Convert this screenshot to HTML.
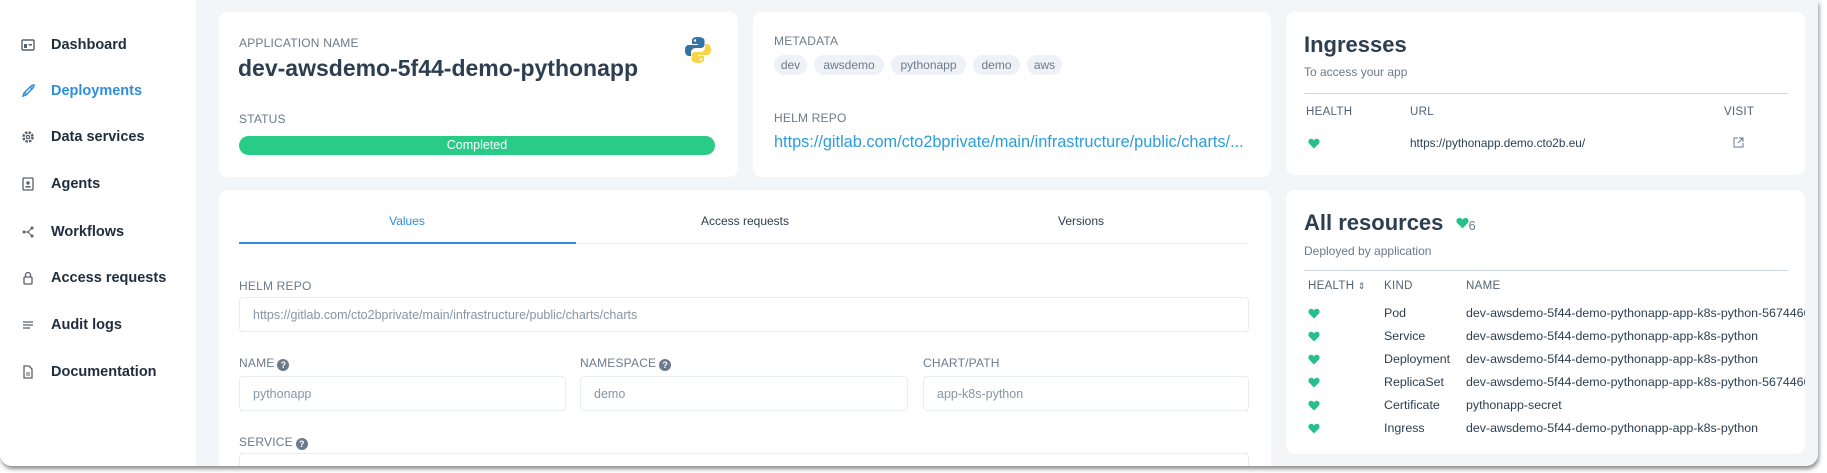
<!DOCTYPE html>
<html><head><meta charset="utf-8"><style>
*{box-sizing:border-box;margin:0;padding:0}
body{width:1827px;height:473px;background:#fff;font-family:"Liberation Sans",sans-serif;color:#2c3e50;overflow:hidden;position:relative}
#app{position:absolute;left:0;top:0;width:1818px;height:466px;background:#f3f6f9;border-radius:0 0 12px 12px;box-shadow:1px 3px 4px rgba(0,0,0,.45);overflow:hidden}
#side{position:absolute;left:0;top:0;width:196px;height:466px;background:#fff}
.nav{position:absolute;left:21px;font-size:14.5px;font-weight:bold;color:#1f2d3d;display:flex;align-items:center}
.nav svg{width:14px;height:14px;margin-right:16px}
.nav.act{color:#2d8fdf}
.card{position:absolute;background:#fff;border-radius:9px;overflow:hidden}
.lbl{position:absolute;font-size:12px;color:#6b7a8c;letter-spacing:.2px}
.chip{position:absolute;top:55px;height:20px;border-radius:10px;background:#eef2f6;color:#6b7a8c;font-size:12px;line-height:20px;text-align:center}
.inp{position:absolute;border:1px solid #e8edf2;border-radius:4px;font-size:12.5px;color:#8795a5;padding-left:13px;display:flex;align-items:center}
.q{display:inline-block;width:12px;height:12px;border-radius:50%;background:#6b7a8c;color:#fff;font-size:9px;line-height:12px;text-align:center;font-weight:bold;vertical-align:-1px;margin-left:3px}
.th{position:absolute;font-size:11.5px;color:#556272;letter-spacing:.3px}
.row{position:absolute;font-size:12.4px;color:#2c3e50;white-space:nowrap}
.heart{position:absolute;width:12px;height:11px}
.h2{position:absolute;font-size:22px;font-weight:bold;color:#2c3e50}
</style></head><body>
<svg width="0" height="0" style="position:absolute"><defs><symbol id="h" viewBox="0 0 24 22"><path d="M12 21L2.5 11.5C-0.5 8.5 0.5 2 6 1.5c3-.2 5 1.8 6 3.5 1-1.7 3-3.7 6-3.5 5.5.5 6.5 7 3.5 10z" fill="#27c08a"/></symbol></defs></svg>
<div id="app">
<div id="side">
<div class="nav" style="top:37px"><svg viewBox="0 0 14 14"><rect x="1" y="2" width="12" height="10" rx="1" fill="none" stroke="#56606b" stroke-width="1.4"/><rect x="3" y="6" width="3" height="4" fill="#56606b"/><rect x="7.5" y="6" width="3.5" height="1.5" fill="#56606b"/></svg>Dashboard</div>
<div class="nav act" style="top:83px"><svg viewBox="0 0 14 14"><path d="M2 12l3-1 6-6c1.5-1.5 2-3 2-4-1 0-2.5.5-4 2L3 9zM4 9l1 1M9 3l2 2" fill="none" stroke="#2d8fdf" stroke-width="1.5"/></svg>Deployments</div>
<div class="nav" style="top:129px"><svg viewBox="0 0 14 14"><circle cx="7" cy="7" r="4.5" fill="none" stroke="#56606b" stroke-width="2.5" stroke-dasharray="2.4 1.2"/><circle cx="7" cy="7" r="1.6" fill="none" stroke="#56606b" stroke-width="1.3"/></svg>Data services</div>
<div class="nav" style="top:176px"><svg viewBox="0 0 14 14"><rect x="2" y="1" width="10" height="12" rx="1" fill="none" stroke="#56606b" stroke-width="1.3"/><circle cx="7" cy="6" r="1.7" fill="#56606b"/><rect x="4.5" y="9" width="5" height="1.5" fill="#56606b"/></svg>Agents</div>
<div class="nav" style="top:224px"><svg viewBox="0 0 14 14"><circle cx="3" cy="7" r="1.5" fill="#56606b"/><circle cx="11" cy="3" r="1.5" fill="#56606b"/><circle cx="11" cy="11" r="1.5" fill="#56606b"/><circle cx="7" cy="7" r="1" fill="#56606b"/><path d="M3 7h4l4-4M7 7l4 4" stroke="#56606b" fill="none"/></svg>Workflows</div>
<div class="nav" style="top:270px"><svg viewBox="0 0 14 14"><rect x="3" y="6" width="8" height="7" rx="1" fill="none" stroke="#56606b" stroke-width="1.3"/><path d="M4.5 6V4a2.5 2.5 0 015 0v2" fill="none" stroke="#56606b" stroke-width="1.3"/></svg>Access requests</div>
<div class="nav" style="top:317px"><svg viewBox="0 0 14 14"><path d="M2 4h10M2 7h10M2 10h7" stroke="#56606b" stroke-width="1.3"/></svg>Audit logs</div>
<div class="nav" style="top:364px"><svg viewBox="0 0 14 14"><path d="M3 1h5l3 3v9H3z" fill="none" stroke="#56606b" stroke-width="1.3"/><path d="M5 8h4M5 10h4" stroke="#56606b"/></svg>Documentation</div>
</div>

<div class="card" style="left:219px;top:12px;width:519px;height:165px">
<div class="lbl" style="left:20px;top:24px">APPLICATION NAME</div>
<div style="position:absolute;left:19px;top:43px;font-size:23px;font-weight:bold;color:#2c3e50">dev-awsdemo-5f44-demo-pythonapp</div>
<svg style="position:absolute;left:466px;top:24px" width="26" height="28" viewBox="0 0 26 28"><path d="M13 1c-6 0-6 2.5-6 4v3h6v1H4C1 9 0 11 0 14.5S1.5 20 4 20h2v-3.5c0-2.5 2-4.5 4.5-4.5h5.5c2 0 3.5-1.5 3.5-3.5V4.5C19.5 2.5 17 1 13 1z" fill="#3572a5"/><circle cx="10" cy="4.5" r="1.2" fill="#fff"/><path d="M13 27c6 0 6-2.5 6-4v-3h-6v-1h9c3 0 4-2 4-5.5S24.5 8 22 8h-2v3.5c0 2.5-2 4.5-4.5 4.5H10c-2 0-3.5 1.5-3.5 3.5v4c0 2 2.5 3.5 6.5 3.5z" fill="#f7d44a"/><circle cx="16" cy="23.5" r="1.2" fill="#fff"/></svg>
<div class="lbl" style="left:20px;top:100px">STATUS</div>
<div style="position:absolute;left:20px;top:124px;width:476px;height:19px;border-radius:10px;background:#29cc87;color:#fff;font-size:12.5px;line-height:19px;text-align:center">Completed</div>
</div>

<div class="card" style="left:753px;top:12px;width:518px;height:165px">
<div class="lbl" style="left:21px;top:22px">METADATA</div>
<div class="chip" style="left:21px;width:33px;top:43px">dev</div>
<div class="chip" style="left:61px;width:70px;top:43px">awsdemo</div>
<div class="chip" style="left:138px;width:75px;top:43px">pythonapp</div>
<div class="chip" style="left:220px;width:47px;top:43px">demo</div>
<div class="chip" style="left:274px;width:35px;top:43px">aws</div>
<div class="lbl" style="left:21px;top:99px">HELM REPO</div>
<div style="position:absolute;left:21px;top:121px;font-size:16.3px;color:#2d9cdb;white-space:nowrap">https://gitlab.com/cto2bprivate/main/infrastructure/public/charts/...</div>
</div>

<div class="card" style="left:1286px;top:12px;width:519px;height:163px">
<div class="h2" style="left:18px;top:20px">Ingresses</div>
<div style="position:absolute;left:18px;top:53px;font-size:12px;color:#6b7a8c">To access your app</div>
<div style="position:absolute;left:18px;top:81px;width:484px;height:1px;background:#cfd8e3"></div>
<div class="th" style="left:20px;top:94px">HEALTH</div>
<div class="th" style="left:124px;top:94px">URL</div>
<div class="th" style="left:438px;top:94px">VISIT</div>
<svg class="heart" style="left:22px;top:126px"><use href="#h"/></svg>
<div class="row" style="left:124px;top:124px;font-size:11.8px">https://pythonapp.demo.cto2b.eu/</div>
<svg style="position:absolute;left:447px;top:125px" width="11" height="11" viewBox="0 0 11 11"><path d="M5 1H1v9h9V6M6 1h4v4M10 1L5 6" fill="none" stroke="#6b7a8c" stroke-width="1"/></svg>
</div>

<div class="card" style="left:219px;top:190px;width:1052px;height:300px">
<div style="position:absolute;left:188px;top:24px;font-size:12px;color:#2d8fdf;transform:translateX(-50%)">Values</div>
<div style="position:absolute;left:526px;top:24px;font-size:12px;color:#2c3e50;transform:translateX(-50%)">Access requests</div>
<div style="position:absolute;left:862px;top:24px;font-size:12px;color:#2c3e50;transform:translateX(-50%)">Versions</div>
<div style="position:absolute;left:20px;top:53px;width:1010px;height:1px;background:#e6ebf0"></div>
<div style="position:absolute;left:20px;top:52px;width:337px;height:2px;background:#2d8fdf"></div>
<div class="lbl" style="left:20px;top:89px">HELM REPO</div>
<div class="inp" style="left:20px;top:107px;width:1010px;height:35px">https://gitlab.com/cto2bprivate/main/infrastructure/public/charts/charts</div>
<div class="lbl" style="left:20px;top:166px">NAME<span class="q">?</span></div>
<div class="lbl" style="left:361px;top:166px">NAMESPACE<span class="q">?</span></div>
<div class="lbl" style="left:704px;top:166px">CHART/PATH</div>
<div class="inp" style="left:20px;top:186px;width:327px;height:35px">pythonapp</div>
<div class="inp" style="left:361px;top:186px;width:328px;height:35px">demo</div>
<div class="inp" style="left:704px;top:186px;width:326px;height:35px">app-k8s-python</div>
<div class="lbl" style="left:20px;top:245px">SERVICE<span class="q">?</span></div>
<div class="inp" style="left:20px;top:263px;width:1010px;height:35px"></div>
</div>

<div class="card" style="left:1286px;top:190px;width:519px;height:264px">
<div class="h2" style="left:18px;top:20px">All resources <svg width="13" height="12" style="margin-left:6px;vertical-align:1px"><use href="#h"/></svg><span style="font-size:13px;font-weight:normal;color:#6b7a8c">6</span></div>
<div style="position:absolute;left:18px;top:54px;font-size:12px;color:#6b7a8c">Deployed by application</div>
<div style="position:absolute;left:18px;top:80px;width:484px;height:1px;background:#cfd8e3"></div>
<div class="th" style="left:22px;top:90px">HEALTH <span style="font-size:9px">⇕</span></div>
<div class="th" style="left:98px;top:90px">KIND</div>
<div class="th" style="left:180px;top:90px">NAME</div>
<svg class="heart" style="left:22px;top:118px"><use href="#h"/></svg><div class="row" style="left:98px;top:116px">Pod</div><div class="row" style="left:180px;top:116px">dev-awsdemo-5f44-demo-pythonapp-app-k8s-python-5674466</div>
<svg class="heart" style="left:22px;top:141px"><use href="#h"/></svg><div class="row" style="left:98px;top:139px">Service</div><div class="row" style="left:180px;top:139px">dev-awsdemo-5f44-demo-pythonapp-app-k8s-python</div>
<svg class="heart" style="left:22px;top:164px"><use href="#h"/></svg><div class="row" style="left:98px;top:162px">Deployment</div><div class="row" style="left:180px;top:162px">dev-awsdemo-5f44-demo-pythonapp-app-k8s-python</div>
<svg class="heart" style="left:22px;top:187px"><use href="#h"/></svg><div class="row" style="left:98px;top:185px">ReplicaSet</div><div class="row" style="left:180px;top:185px">dev-awsdemo-5f44-demo-pythonapp-app-k8s-python-5674466</div>
<svg class="heart" style="left:22px;top:210px"><use href="#h"/></svg><div class="row" style="left:98px;top:208px">Certificate</div><div class="row" style="left:180px;top:208px">pythonapp-secret</div>
<svg class="heart" style="left:22px;top:233px"><use href="#h"/></svg><div class="row" style="left:98px;top:231px">Ingress</div><div class="row" style="left:180px;top:231px">dev-awsdemo-5f44-demo-pythonapp-app-k8s-python</div>
</div>
</div>
</body></html>
